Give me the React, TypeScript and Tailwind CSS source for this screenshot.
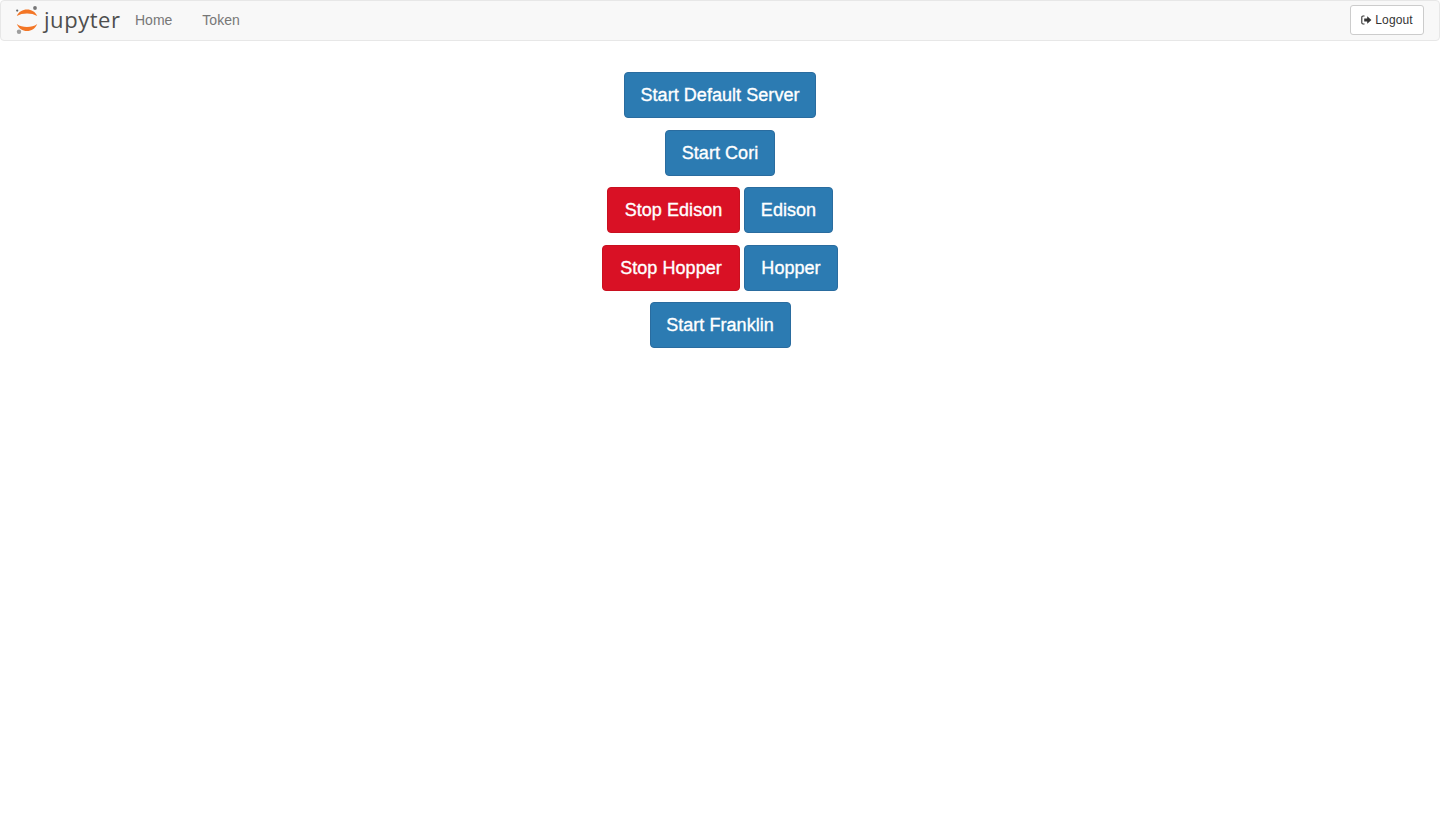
import React from 'react';

const sans = 'font-["Liberation_Sans",Arial,sans-serif]';

const JupyterMark = () => (
  <svg width="26" height="30" viewBox="0 0 26 30" className="block">
    <path d="M1.800 10C3.600 5.800 7.600 3.500 12 3.500s8.400 2.300 10.200 6.500C19.200 8.300 16 7.500 12 7.500s-7.200.8-10.200 2.500z" fill="#f37626" />
    <path d="M1.800 18C3.600 22.400 7.600 25 12 25s8.400-2.600 10.200-7C19.200 20.200 16 21 12 21s-7.200-.8-10.200-3z" fill="#f37626" />
    <circle cx="20" cy="2" r="1.900" fill="#767677" />
    <circle cx="2.200" cy="4.600" r="1.100" fill="#616262" />
    <circle cx="4" cy="25.800" r="2.200" fill="#9e9e9e" />
  </svg>
);

const LogoutIcon = () => (
  <svg width="11" height="10" viewBox="0 0 11 10" className="block">
    <path d="M3.500 1H2a1.200 1.200 0 0 0-1.200 1.200v5.600A1.200 1.200 0 0 0 2 9h1.500" fill="none" stroke="#333" strokeWidth="1.100" />
    <path d="M3.200 3.500h3V1.300L10.400 5 6.200 8.700V6.500h-3z" fill="#333" />
  </svg>
);

const ServerButton = ({ label, danger, width }: { label: string; danger?: boolean; width: string }) => (
  <button
    className={`${width} h-[46px] rounded-[4px] border text-white text-[18px] leading-[24px] tracking-[0.05px] [-webkit-text-stroke:0.35px_white] ${
      danger ? 'border-[#c9101f] bg-[#d91125]' : 'border-[#2a6c9f] bg-[#2c7bb2]'
    }`}
  >
    {label}
  </button>
);

export default function App() {
  return (
    <div className={`min-h-[825px] bg-white text-[#333] ${sans}`}>
      <nav className="h-[41px] flex items-center justify-between bg-[#f8f8f8] border border-[#e7e7e7] rounded-[4px]">
        <div className="flex items-center">
          <div className="flex items-center ml-[14px] w-[120px]">
            <JupyterMark />
            <span className='ml-[3px] -mt-[3px] font-["Open_Sans",sans-serif] text-[22px] leading-[30px] tracking-[0.55px] text-[#4e4e4e]'>
              jupyter
            </span>
          </div>
          <a className="text-[14px] text-[#777]">Home</a>
          <a className="ml-[30px] text-[14px] text-[#777]">Token</a>
        </div>
        <button className="mr-[15px] -mt-[2px] w-[74px] h-[30px] flex items-center justify-center gap-[3px] bg-white border border-[#ccc] rounded-[3px] text-[12px] tracking-[0.1px] text-[#333]">
          <LogoutIcon />
          Logout
        </button>
      </nav>
      <main className="pt-[31px] flex flex-col items-center gap-[11.5px]">
        <ServerButton label="Start Default Server" width="w-[192px]" />
        <ServerButton label="Start Cori" width="w-[110px]" />
        <div className="flex gap-1">
          <ServerButton label="Stop Edison" danger width="w-[133px]" />
          <ServerButton label="Edison" width="w-[89px]" />
        </div>
        <div className="flex gap-1">
          <ServerButton label="Stop Hopper" danger width="w-[138px]" />
          <ServerButton label="Hopper" width="w-[94px]" />
        </div>
        <ServerButton label="Start Franklin" width="w-[141px]" />
      </main>
    </div>
  );
}
